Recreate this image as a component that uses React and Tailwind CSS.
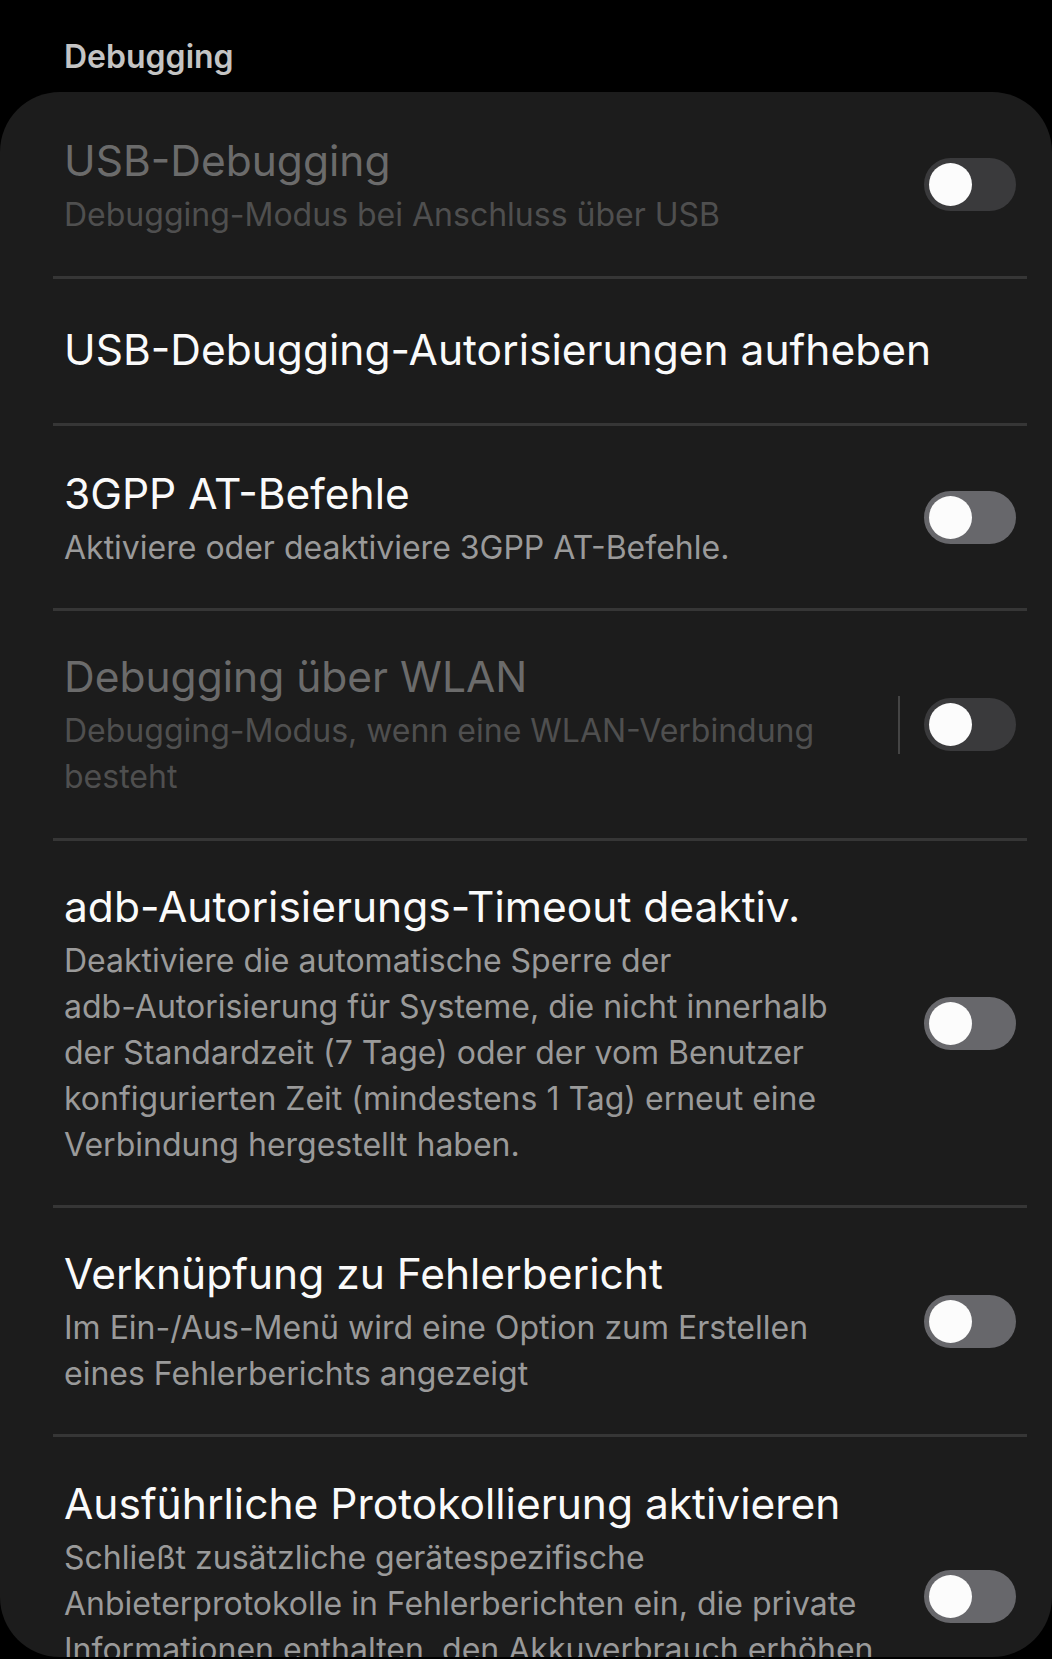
import React from "react";

const rows = [
  {
    title: "USB-Debugging",
    sub: ["Debugging-Modus bei Anschluss über USB"],
    toggle: true,
    disabled: true,
    pad: "pt-[43px] pb-[38px]",
  },
  {
    title: "USB-Debugging-Autorisierungen aufheben",
    sub: [],
    toggle: false,
    pad: "pt-[45px] pb-[47px]",
  },
  {
    title: "3GPP AT-Befehle",
    sub: ["Aktiviere oder deaktiviere 3GPP AT-Befehle."],
    toggle: true,
    pad: "pt-[42px] pb-[37px]",
  },
  {
    title: "Debugging über WLAN",
    sub: ["Debugging-Modus, wenn eine WLAN-Verbindung", "besteht"],
    toggle: true,
    disabled: true,
    separator: true,
    pad: "pt-[40px] pb-[38px]",
  },
  {
    title: "adb-Autorisierungs-Timeout deaktiv.",
    sub: [
      "Deaktiviere die automatische Sperre der",
      "adb-Autorisierung für Systeme, die nicht innerhalb",
      "der Standardzeit (7 Tage) oder der vom Benutzer",
      "konfigurierten Zeit (mindestens 1 Tag) erneut eine",
      "Verbindung hergestellt haben.",
    ],
    toggle: true,
    pad: "pt-[40px] pb-[37px]",
  },
  {
    title: "Verknüpfung zu Fehlerbericht",
    sub: ["Im Ein-/Aus-Menü wird eine Option zum Erstellen", "eines Fehlerberichts angezeigt"],
    toggle: true,
    pad: "pt-[40px] pb-[37px]",
  },
  {
    title: "Ausführliche Protokollierung aktivieren",
    sub: [
      "Schließt zusätzliche gerätespezifische",
      "Anbieterprotokolle in Fehlerberichten ein, die private",
      "Informationen enthalten, den Akkuverbrauch erhöhen",
      "und/oder mehr Speicherplatz belegen.",
    ],
    toggle: true,
    pad: "pt-[41px] pb-[36px]",
  },
];

function Toggle({ disabled }) {
  return (
    <div
      className={
        "flex h-[53px] w-[92px] shrink-0 items-center rounded-full pl-[5px] " +
        (disabled ? "bg-[#3a3a3c]" : "bg-[#67676b]")
      }
    >
      <div className="h-[43px] w-[43px] rounded-full bg-[#fcfcfc]" />
    </div>
  );
}

function Row({ row, last }) {
  return (
    <div className={last ? "" : "border-b-[3px] border-[#363636]"}>
      <div className="flex items-center pl-[11px] pr-[11px]">
        <div className={"min-w-0 flex-1 " + row.pad}>
          <div
            className={
              "whitespace-nowrap text-[42.5px] leading-[52px] " +
              (row.disabled ? "text-[#6b6b6b]" : "text-[#fafafa]")
            }
          >
            {row.title}
          </div>
          {row.sub.length > 0 && (
            <div
              className={
                "mt-[5px] text-[32px] leading-[46px] " +
                (row.disabled ? "text-[#4f4f4f]" : "text-[#9a9a9a]")
              }
            >
              {row.sub.map((line) => (
                <div key={line} className="whitespace-nowrap">
                  {line}
                </div>
              ))}
            </div>
          )}
        </div>
        {row.separator && <div className="mr-[24px] h-[58px] w-[2px] bg-[#444444]" />}
        {row.toggle && <Toggle disabled={row.disabled} />}
      </div>
    </div>
  );
}

export default function App() {
  return (
    <div
      className="h-[1659px] w-full overflow-hidden bg-black"
      style={{ fontFamily: "Inter, 'Noto Sans', sans-serif" }}
    >
      <div className="pl-[64px] pt-[39px] text-[32px] font-semibold leading-[36px] text-[#c4c4c4]">
        Debugging
      </div>
      <div className="mt-[17px] h-[1565px] overflow-hidden rounded-[60px] bg-[#1c1c1c] pl-[53px] pr-[25px]">
        {rows.map((row, i) => (
          <Row key={row.title} row={row} last={i === rows.length - 1} />
        ))}
      </div>
    </div>
  );
}
